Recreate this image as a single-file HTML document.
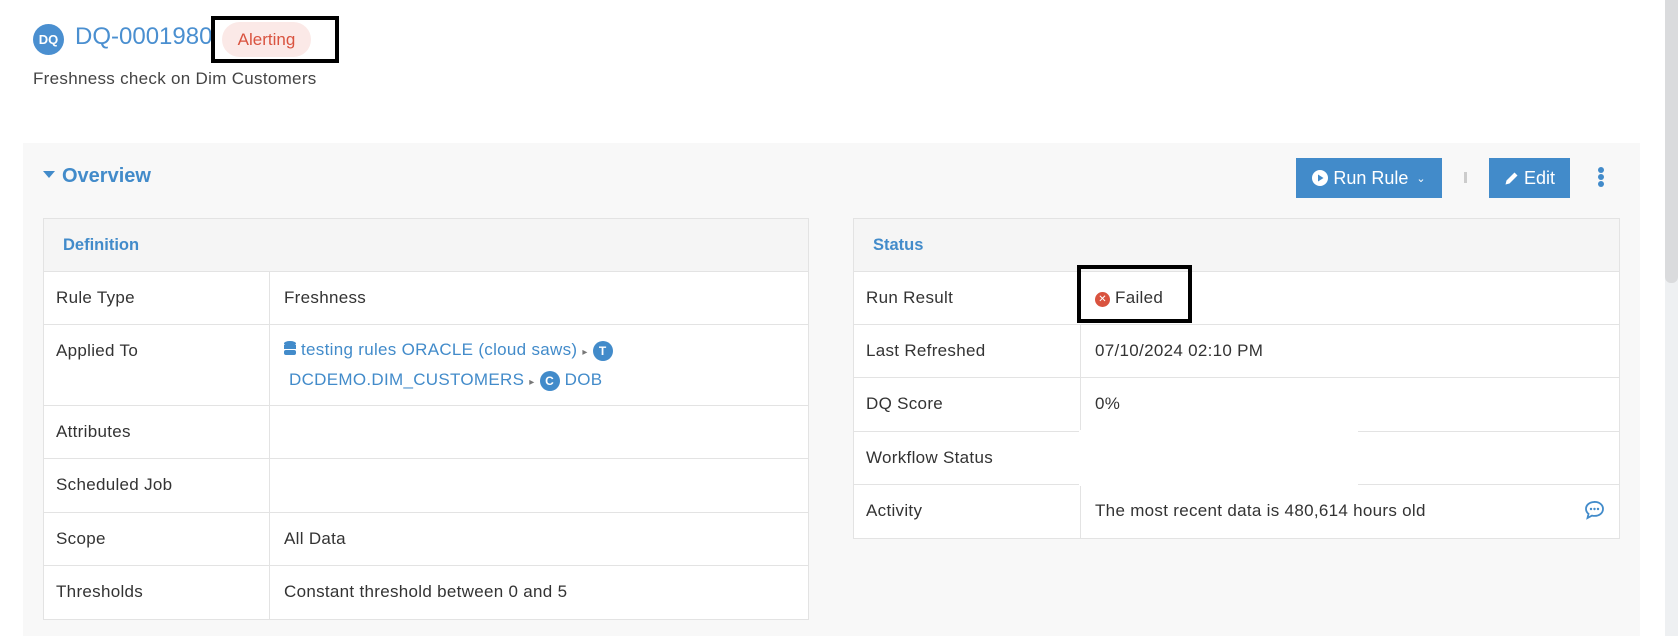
<!DOCTYPE html>
<html><head><meta charset="utf-8"><style>
*{box-sizing:border-box;margin:0;padding:0}
html,body{width:1678px;height:636px;overflow:hidden}
body{background:#fff;font-family:"Liberation Sans",sans-serif;color:#333;position:relative}
.abs{position:absolute}
.panel{left:23px;top:143px;width:1617px;height:493px;background:#f8f8f8}
.box{background:#fff;border:1px solid #e3e3e3}
.hdr{background:#f5f5f5;height:53px;border-bottom:1px solid #e3e3e3;color:#428bca;font-weight:bold;font-size:16.5px;padding:17px 19px}
.row{border-bottom:1px solid #e3e3e3;display:flex;font-size:17px;letter-spacing:.3px}
.row:last-child{border-bottom:none}
.row .l{padding:16px 12px;border-right:1px solid #e3e3e3}
.row .v{padding:16px 14px}
.blue{color:#428bca}
.btn{background:#428bca;color:#fff;font-size:18px;display:flex;align-items:center;justify-content:center}
</style></head><body>
<div class="abs" style="left:33px;top:24px;width:31px;height:31px;border-radius:50%;background:#4a8fd0;color:#fff;font-weight:bold;font-size:13px;text-align:center;line-height:31px">DQ</div>
<div class="abs" style="left:75px;top:23px;font-size:24px;color:#4a8fd0">DQ-0001980</div>
<div class="abs" style="left:222px;top:22px;width:89px;height:35px;border-radius:18px;background:#fbe9e7;color:#d9533f;font-size:17px;text-align:center;line-height:35px">Alerting</div>
<div class="abs" style="left:211px;top:16px;width:128px;height:47px;border:4px solid #000"></div>
<div class="abs" style="left:33px;top:69px;font-size:17px;letter-spacing:.3px;color:#444">Freshness check on Dim Customers</div>

<div class="abs panel"></div>
<div class="abs" style="left:43px;top:171px;width:0;height:0;border-left:6px solid transparent;border-right:6px solid transparent;border-top:7px solid #428bca"></div>
<div class="abs" style="left:62px;top:165px;font-size:20px;font-weight:bold;color:#428bca">Overview</div>

<div class="abs btn" style="left:1296px;top:158px;width:146px;height:40px"><svg width="16" height="16" viewBox="0 0 16 16" style="margin-right:5px"><circle cx="8" cy="8" r="8" fill="#fff"/><path d="M6 4.5v7l5.5-3.5z" fill="#428bca"/></svg>Run Rule <span style="font-size:11px;margin-left:8px">&#8964;</span></div>
<div class="abs" style="left:1464px;top:172px;width:3px;height:11px;background:#ccc"></div>
<div class="abs btn" style="left:1489px;top:158px;width:81px;height:40px"><svg width="16" height="16" viewBox="0 0 16 16" style="margin-right:4px"><path d="M1.5 14.5l1-4 8-8 3 3-8 8z" fill="#fff"/></svg>Edit</div>
<div class="abs" style="left:1598px;top:167px;width:6px;height:6px;border-radius:50%;background:#428bca;box-shadow:0 7px 0 #428bca,0 14px 0 #428bca"></div>

<div class="abs box" style="left:43px;top:218px;width:766px;height:402px">
<div class="hdr" style="height:53px">Definition</div>
<div class="row" style="height:53px"><div class="l" style="width:226px">Rule Type</div><div class="v">Freshness</div></div>
<div class="row" style="height:81px"><div class="l" style="width:226px">Applied To</div><div class="v blue" style="line-height:27px;padding-top:11px">
<svg width="12" height="14" viewBox="0 0 12 14"><ellipse cx="6" cy="2.5" rx="6" ry="2.5" fill="#428bca"/><rect x="0" y="4" width="12" height="4" fill="#428bca"/><rect x="0" y="9" width="12" height="5" rx="2" fill="#428bca"/></svg> testing rules ORACLE (cloud saws) <span style="color:#777;font-size:10px">&#9656;</span> <span style="display:inline-block;width:20px;height:20px;border-radius:50%;background:#428bca;color:#fff;font-size:12px;font-weight:bold;text-align:center;line-height:20px;vertical-align:0">T</span><br>
&nbsp;DCDEMO.DIM_CUSTOMERS <span style="color:#777;font-size:10px">&#9656;</span> <span style="display:inline-block;width:20px;height:20px;border-radius:50%;background:#428bca;color:#fff;font-size:12px;font-weight:bold;text-align:center;line-height:20px;vertical-align:0">C</span> DOB</div></div>
<div class="row" style="height:53px"><div class="l" style="width:226px">Attributes</div></div>
<div class="row" style="height:54px"><div class="l" style="width:226px">Scheduled Job</div></div>
<div class="row" style="height:53px"><div class="l" style="width:226px">Scope</div><div class="v">All Data</div></div>
<div class="row" style="height:53px"><div class="l" style="width:226px">Thresholds</div><div class="v">Constant threshold between 0 and 5</div></div>
</div>

<div class="abs box" style="left:853px;top:218px;width:767px;height:321px">
<div class="hdr">Status</div>
<div class="row" style="height:53px"><div class="l" style="width:227px;border-right:none">Run Result</div><div class="v" style="padding-left:14px"><span style="display:inline-block;width:15px;height:15px;border-radius:50%;background:#d9533f;color:#fff;font-size:10px;text-align:center;line-height:15px;vertical-align:1px;letter-spacing:0">&#10005;</span> Failed</div></div>
<div class="row" style="height:53px"><div class="l" style="width:227px">Last Refreshed</div><div class="v">07/10/2024 02:10 PM</div></div>
<div class="row" style="height:54px"><div class="l" style="width:227px">DQ Score</div><div class="v">0%</div></div>
<div class="row" style="height:53px"><div class="l" style="width:227px">Workflow Status</div></div>
<div class="row" style="height:53px;position:relative"><div class="l" style="width:227px">Activity</div><div class="v">The most recent data is 480,614 hours old</div>
<svg class="abs" style="right:14px;top:15px" width="21" height="20" viewBox="0 0 21 20"><path d="M10.5 2C5.5 2 2 5 2 9c0 2 1 3.6 2.5 4.8L3.5 18l4.5-2.4c.8.2 1.6.3 2.5.3 5 0 8.5-3 8.5-7s-3.5-7-8.5-7z" fill="none" stroke="#428bca" stroke-width="1.8"/><circle cx="7" cy="9" r="1.2" fill="#428bca"/><circle cx="10.5" cy="9" r="1.2" fill="#428bca"/><circle cx="14" cy="9" r="1.2" fill="#428bca"/></svg></div>
</div>
<div class="abs" style="left:1079px;top:430px;width:279px;height:56px;background:#fff"></div>
<div class="abs" style="left:1077px;top:265px;width:115px;height:58px;border:4px solid #000"></div>

<div class="abs" style="left:1665px;top:0;width:13px;height:636px;background:#eef0f2"></div>
<div class="abs" style="left:1665px;top:0;width:13px;height:283px;background:#dadbdd;border-radius:0 0 6px 6px"></div>
</body></html>
